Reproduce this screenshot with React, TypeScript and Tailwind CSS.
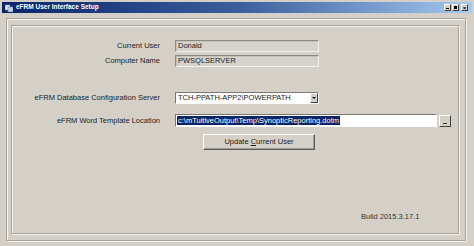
import React from "react";

const font = { fontFamily: '"Liberation Sans", Arial, sans-serif' };

function Field({ label, children }: { label: string; children: React.ReactNode }) {
  return (
    <div className="flex items-center">
      <div className="w-[149px] shrink-0 pr-[1px] text-right text-[7.5px] leading-none text-[#222]">{label}</div>
      <div className="ml-[14px] flex items-center">{children}</div>
    </div>
  );
}

function ReadOnlyBox({ value }: { value: string }) {
  return (
    <div className="flex h-[12px] w-[144px] items-center border border-t-[#8c8a84] border-l-[#8c8a84] border-b-[#f2f0ec] border-r-[#f2f0ec] bg-[#d6d3cc] pl-[2px] text-[7.5px] leading-none text-[#222] shadow-[inset_1px_1px_0_#c4c1ba]">
      {value}
    </div>
  );
}

export default function App() {
  return (
    <div className="relative h-[246px] w-[474px] overflow-hidden bg-[#d4d0c8] pt-[2px]" style={font}>
      {/* title bar */}
      <div className="mx-[2px] flex h-[11px] items-center bg-gradient-to-r from-[#0a246a] via-[#3a5e9c] to-[#a6caf0] pl-[3px] pr-[4px]">
        <svg width="8" height="8" viewBox="0 0 8 8" className="shrink-0">
          <rect x="0" y="1" width="5" height="5" fill="#dfe7f2" stroke="#6f8fb8" strokeWidth="0.6" />
          <rect x="3" y="3" width="5" height="5" fill="#c7d3e4" stroke="#6f8fb8" strokeWidth="0.6" />
        </svg>
        <span className="ml-[3px] text-[6.5px] font-bold leading-none text-white">eFRM User Interface Setup</span>
        <div className="ml-auto flex gap-[1px]">
          <div className="relative h-[7px] w-[7px] border border-t-white border-l-white border-b-[#404040] border-r-[#404040] bg-[#d4d0c8]">
            <div className="absolute bottom-[1px] left-[1px] h-[1px] w-[3px] bg-black" />
          </div>
          <div className="relative h-[7px] w-[7px] border border-t-white border-l-white border-b-[#404040] border-r-[#404040] bg-[#d4d0c8]">
            <div className="absolute left-[1px] top-[1px] h-[3px] w-[3px] border border-t-2 border-black" />
          </div>
          <div className="ml-[1px] flex h-[7px] w-[7px] items-center justify-center border border-t-white border-l-white border-b-[#404040] border-r-[#404040] bg-[#d4d0c8] text-[6px] font-bold leading-none text-black">
            ×
          </div>
        </div>
      </div>

      {/* outer frame */}
      <div className="ml-[6px] mt-[5px] h-[223px] w-[460px] border border-[#a8a49c] shadow-[inset_1px_1px_0_#f4f2ee,1px_1px_0_#f4f2ee] pb-[6px] pl-[4px] pr-[6px] pt-[6px]">
        {/* inner frame */}
        <div className="relative h-[209px] w-[448px] border border-[#a8a49c] shadow-[inset_1px_1px_0_#f4f2ee,1px_1px_0_#f4f2ee]">
          <div className="flex flex-col pt-[14px]">
            <Field label="Current User">
              <ReadOnlyBox value="Donald" />
            </Field>
            <div className="mt-[3px]">
              <Field label="Computer Name">
                <ReadOnlyBox value="PWSQLSERVER" />
              </Field>
            </div>
            <div className="mt-[25px]">
              <Field label="eFRM Database Configuration Server">
                <div className="flex h-[12px] w-[144px] items-center border border-t-[#7a7872] border-l-[#7a7872] border-b-white border-r-white bg-white pl-[2px] text-[7.5px] leading-none text-[#222]">
                  <span className="flex-1">TCH-PPATH-APP2\POWERPATH</span>
                  <div className="flex h-[10px] w-[8px] items-center justify-center border border-t-white border-l-white border-b-[#404040] border-r-[#404040] bg-[#d4d0c8]">
                    <div className="h-0 w-0 border-l-[2px] border-r-[2px] border-t-[2px] border-l-transparent border-r-transparent border-t-black" />
                  </div>
                </div>
              </Field>
            </div>
            <div className="mt-[10px]">
              <Field label="eFRM Word Template Location">
                <div className="flex h-[13px] w-[262px] items-center border border-t-[#7a7872] border-l-[#7a7872] border-b-white border-r-white bg-white pl-[1px] text-[7.5px] leading-none">
                  <span className="bg-[#0a246a] px-[1px] py-[1px] text-white">c:\mTuitiveOutput\Temp\SynopticReporting.dotm</span>
                </div>
                <div className="ml-[2px] flex h-[12px] w-[12px] items-end justify-center border border-t-white border-l-white border-b-[#404040] border-r-[#404040] bg-[#d4d0c8] pb-[2px]">
                  <div className="h-[1px] w-[4px] bg-[#333]" />
                </div>
              </Field>
            </div>
            <div className="ml-[191px] mt-[7px] flex h-[16px] w-[112px] items-center justify-center border border-t-white border-l-white border-b-[#5a5a5a] border-r-[#5a5a5a] bg-[#d4d0c8] text-[7.5px] leading-none text-[#222] shadow-[inset_-1px_-1px_0_#a09c94]">
              Update <span className="ml-[2px] underline">C</span>urrent User
            </div>
          </div>
          <div className="absolute left-[349px] top-[187px] text-[7.5px] leading-none text-[#333]">Build 2015.3.17.1</div>
        </div>
      </div>
    </div>
  );
}
